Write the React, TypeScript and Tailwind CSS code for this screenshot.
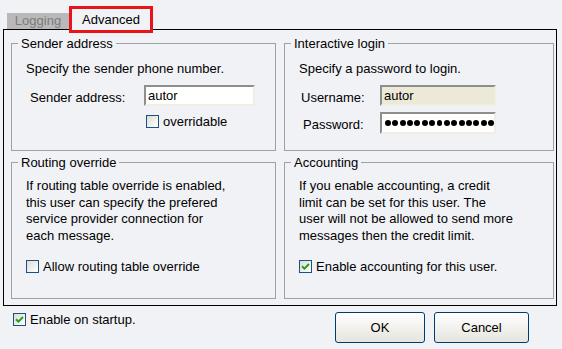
import React from "react";

const Checkbox = ({ checked, label }: { checked?: boolean; label: string }) => (
  <label className="flex items-center h-[15px] leading-[15px]">
    <span className="w-[13px] h-[13px] border border-[#1c5180] bg-linear-to-br from-[#dcdcd6] to-white flex items-center justify-center shrink-0">
      {checked && (
        <svg width="11" height="11" viewBox="0 0 11 11">
          <path d="M2 5.2 L4.4 7.6 L9 3" fill="none" stroke="#21a121" strokeWidth="2" />
        </svg>
      )}
    </span>
    <span className="ml-[4px]">{label}</span>
  </label>
);

const Field = ({ value, disabled }: { value: string; disabled?: boolean }) => (
  <div
    className={`h-[21px] border-2 border-t-[#8d8e8e] border-l-[#8d8e8e] border-r-[#efeee6] border-b-[#efeee6] px-[2px] flex items-center ${
      disabled ? "bg-[#ece9d8]" : "bg-[#fffffd]"
    }`}
  >
    {value}
  </div>
);

const PasswordField = () => (
  <div className="h-[22px] border-2 border-t-[#8d8e8e] border-l-[#8d8e8e] border-r-[#efeee6] border-b-[#efeee6] bg-[#fffffd] pl-[3px] flex items-center gap-[1.4px]">
    {[...Array(15)].map((_, i) => (
      <span key={i} className="w-[6px] h-[6px] rounded-full bg-black" />
    ))}
  </div>
);

const Group = ({
  title,
  className,
  children,
}: {
  title: string;
  className: string;
  children: React.ReactNode;
}) => (
  <fieldset className={`border border-[#a0a0a0] ${className}`}>
    <legend className="ml-[6px] px-[3px] leading-[15px]">{title}</legend>
    {children}
  </fieldset>
);

export default function App() {
  return (
    <div className="w-[562px] h-[349px] bg-[#f1f2f6] text-black text-[13px] font-['Liberation_Sans',Arial,sans-serif] overflow-hidden">
      {/* tabs */}
      <div className="flex items-start h-[29px]">
        <div className="ml-[7px] mt-[13px] w-[62px] h-[16px] bg-[#b9b9b9] text-[#7d7d7d] flex items-center justify-center leading-[16px]">
          Logging
        </div>
        <div className="relative z-10 mt-[6px] w-[84px] h-[27px] border-[3px] border-[#e8141b] bg-[#f1f2f6] flex items-center justify-center leading-[15px]">
          Advanced
        </div>
      </div>

      {/* tab page */}
      <div className="ml-[3px] w-[554px] h-[277px] border border-black flex flex-col gap-[4px] pt-[6px] pl-[7px]">
        <div className="flex gap-[8px]">
          <Group title="Sender address" className="w-[265px] h-[115px]">
            <div className="pl-[14px] pt-[10px] leading-[15px]">
              <div>Specify the sender phone number.</div>
              <div className="mt-[9px] flex items-end">
                <span className="w-[118px] pl-[4px] mb-[1px]">Sender address:</span>
                <div className="w-[111px]">
                  <Field value="autor" />
                </div>
              </div>
              <div className="mt-[8px] ml-[120px]">
                <Checkbox label="overridable" />
              </div>
            </div>
          </Group>
          <Group title="Interactive login" className="w-[270px] h-[115px]">
            <div className="pl-[14px] pt-[10px] leading-[15px]">
              <div>Specify a password to login.</div>
              <div className="mt-[9px] flex items-end">
                <span className="w-[81px] pl-[2px] mb-[1px]">Username:</span>
                <div className="w-[116px]">
                  <Field value="autor" disabled />
                </div>
              </div>
              <div className="mt-[6px] flex items-end">
                <span className="w-[81px] pl-[4px] mb-[2px]">Password:</span>
                <div className="w-[116px]">
                  <PasswordField />
                </div>
              </div>
            </div>
          </Group>
        </div>

        <div className="flex gap-[8px]">
          <Group title="Routing override" className="w-[265px] h-[144px]">
            <div className="pl-[14px] pt-[8px]">
              <p className="leading-[16.5px]">
                If routing table override is enabled,
                <br />
                this user can specify the prefered
                <br />
                service provider connection for
                <br />
                each message.
              </p>
              <div className="mt-[15px]">
                <Checkbox label="Allow routing table override" />
              </div>
            </div>
          </Group>
          <Group title="Accounting" className="w-[270px] h-[144px]">
            <div className="pl-[14px] pt-[8px]">
              <p className="leading-[16.5px]">
                If you enable accounting, a credit
                <br />
                limit can be set for this user. The
                <br />
                user will not be allowed to send more
                <br />
                messages then the credit limit.
              </p>
              <div className="mt-[15px]">
                <Checkbox checked label="Enable accounting for this user." />
              </div>
            </div>
          </Group>
        </div>
      </div>

      {/* footer */}
      <div className="flex items-start justify-between pt-[6px] pl-[13px] pr-[33px]">
        <div className="pt-[0px]">
          <Checkbox checked label="Enable on startup." />
        </div>
        <div className="flex gap-[9px]">
          <button className="w-[90px] h-[31px] rounded-[3px] border border-[#003c74] bg-linear-to-b from-white to-[#e5e4dd]">
            OK
          </button>
          <button className="w-[95px] h-[31px] rounded-[3px] border border-[#003c74] bg-linear-to-b from-white to-[#e5e4dd]">
            Cancel
          </button>
        </div>
      </div>
    </div>
  );
}
